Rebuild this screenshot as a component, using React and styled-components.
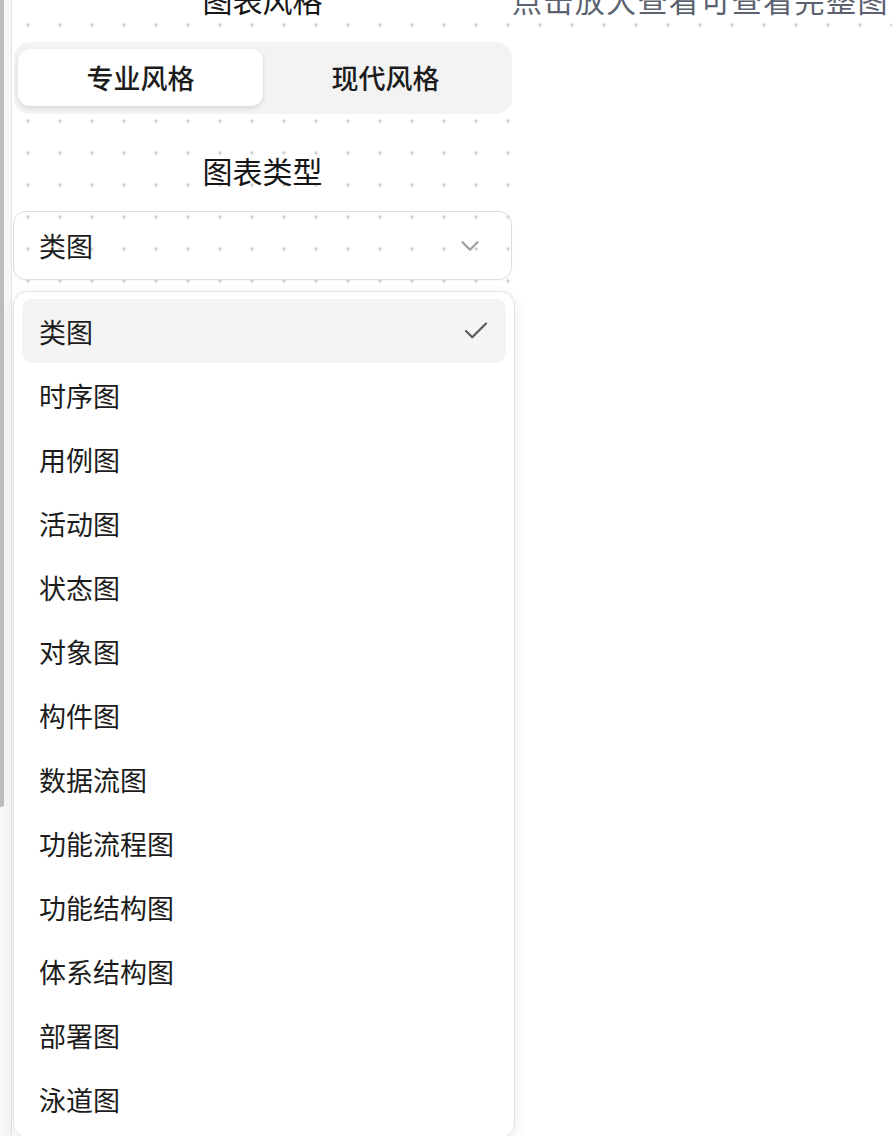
import React, { useState } from 'react';
import styled, { createGlobalStyle } from 'styled-components';
import { Check, ChevronDown } from 'lucide-react';

const GlobalStyle = createGlobalStyle`
  html, body {
    margin: 0;
    padding: 0;
    height: 100%;
    overflow: hidden;
  }
  body {
    font-family: "Noto Sans CJK SC", "Noto Sans", sans-serif;
    background-color: #ffffff;
    background-image: radial-gradient(circle, #d4d4d4 1.4px, transparent 1.9px);
    background-size: 32px 32px;
    background-position: 12px 9px;
  }
`;

const Page = styled.div`
  display: flex;
  height: 1136px;
`;

const Rail = styled.div`
  width: 12px;
  flex-shrink: 0;
  display: flex;
  background: #f7f7f7;
  border-right: 1px solid #e6e6e6;
  box-sizing: border-box;
`;

const RailBar = styled.div`
  width: 4px;
  height: 807px;
  background: #bdbdbd;
  border-bottom-right-radius: 3px;
`;

const Sidebar = styled.div`
  width: 499px;
  margin-left: 1px;
  flex-shrink: 0;
  display: flex;
  flex-direction: column;
  position: relative;
`;

const Heading = styled.div`
  text-align: center;
  font-size: 30px;
  line-height: 40px;
  color: #161616;
  margin-top: ${p => p.$top}px;
`;

const Toggle = styled.div`
  margin-top: 23px;
  margin-left: 1px;
  display: flex;
  padding: 7px 4px 8px;
  background: #f3f3f3;
  border-radius: 16px;
`;

const ToggleButton = styled.div`
  flex: 1;
  height: 57px;
  display: flex;
  align-items: center;
  justify-content: center;
  font-size: 27px;
  font-weight: 500;
  color: #1c1c1c;
  border-radius: 12px;
  background: ${p => (p.$active ? '#ffffff' : 'transparent')};
  box-shadow: ${p => (p.$active ? '0 2px 5px rgba(0,0,0,0.12)' : 'none')};
`;

const SelectBox = styled.div`
  margin-top: 21px;
  height: 69px;
  box-sizing: border-box;
  border: 1.5px solid #dedede;
  border-radius: 13px;
  display: flex;
  align-items: center;
  justify-content: space-between;
  padding: 0 26px 0 25px;
  font-size: 27px;
  color: #1c1c1c;
  box-shadow: 0 1px 2px rgba(0,0,0,0.04);
`;

const Menu = styled.div`
  position: absolute;
  top: 291px;
  left: 0;
  width: 502px;
  box-sizing: border-box;
  padding: 7px 8px 6px;
  background: #ffffff;
  border: 1.5px solid #e2e2e2;
  border-radius: 14px;
  box-shadow: 0 4px 14px rgba(0,0,0,0.08);
`;

const MenuItem = styled.div`
  height: 64px;
  display: flex;
  align-items: center;
  justify-content: space-between;
  padding: 0 15px 0 17px;
  border-radius: 10px;
  font-size: 27px;
  color: #1c1c1c;
  background: ${p => (p.$selected ? '#f4f4f4' : 'transparent')};
`;

const Preview = styled.div`
  flex: 1;
  display: flex;
  flex-direction: column;
`;

const Caption = styled.div`
  margin-top: -21px;
  font-size: 30px;
  line-height: 40px;
  letter-spacing: 1.4px;
  color: #5a6270;
  white-space: nowrap;
  overflow: hidden;
`;

const Canvas = styled.div`
  flex: 1;
  margin-top: 20px;
  background: #ffffff;
`;

const types = [
  '类图', '时序图', '用例图', '活动图', '状态图', '对象图', '构件图',
  '数据流图', '功能流程图', '功能结构图', '体系结构图', '部署图', '泳道图',
];

export default function App() {
  const [style, setStyle] = useState('pro');
  const [type, setType] = useState('类图');

  return (
    <>
      <GlobalStyle />
      <Page>
        <Rail>
          <RailBar />
        </Rail>
        <Sidebar>
          <Heading $top={-21}>图表风格</Heading>
          <Toggle>
            <ToggleButton $active={style === 'pro'} onClick={() => setStyle('pro')}>专业风格</ToggleButton>
            <ToggleButton $active={style === 'modern'} onClick={() => setStyle('modern')}>现代风格</ToggleButton>
          </Toggle>
          <Heading $top={36}>图表类型</Heading>
          <SelectBox>
            {type}
            <ChevronDown size={30} color="#a0a0a0" strokeWidth={1.8} />
          </SelectBox>
          <Menu>
            {types.map(t => (
              <MenuItem key={t} $selected={t === type} onClick={() => setType(t)}>
                {t}
                {t === type && <Check size={30} color="#5c5c5c" strokeWidth={1.8} />}
              </MenuItem>
            ))}
          </Menu>
        </Sidebar>
        <Preview>
          <Caption>点击放大查看可查看完整图</Caption>
          <Canvas />
        </Preview>
      </Page>
    </>
  );
}
